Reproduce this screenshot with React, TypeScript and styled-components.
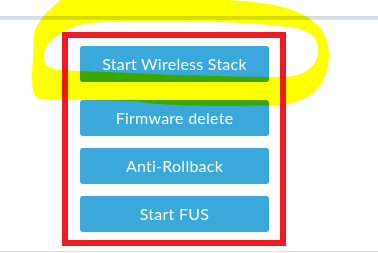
import styled, { createGlobalStyle } from "styled-components";

const GlobalStyle = createGlobalStyle`
  html, body {
    margin: 0;
    padding: 0;
    background: #ffffff;
  }
  body {
    font-family: Lato, "Open Sans", sans-serif;
  }
`;

const Page = styled.div`
  position: relative;
  width: 378px;
  height: 253px;
  display: flex;
  flex-direction: column;
  overflow: hidden;
  background: #fff;
`;

const TopRule = styled.div`
  margin-top: 16px;
  height: 0;
  border-top: 2px solid #d9d9d9;
  border-bottom: 2px solid #d3e6f1;
`;

const Frame = styled.div`
  box-sizing: border-box;
  width: 224px;
  height: 214px;
  margin: 12px 0 0 62px;
  border: 6px solid #ed1c24;
  padding: 8px 11px 8px 12px;
  display: flex;
  flex-direction: column;
`;

const ActionButton = styled.button<{ $gap: number }>`
  height: 36px;
  width: 189px;
  margin: 0 0 ${({ $gap }) => $gap}px 0;
  padding: 0 0 2px 0;
  border: none;
  border-radius: 3px;
  background: #3ba8db;
  color: #f1f8fc;
  font-family: Lato, "Open Sans", sans-serif;
  font-size: 16px;
  letter-spacing: 0.25px;
  text-align: center;
  cursor: pointer;
`;

const BottomRule = styled.div`
  margin-top: 5px;
  height: 1px;
  background: #e4e4e4;
`;

// freehand marker stroke drawn over the page
const Highlighter = styled.svg`
  position: absolute;
  left: 0;
  top: 0;
  pointer-events: none;
  mix-blend-mode: multiply;
`;

const buttons = [
  { label: "Start Wireless Stack", gap: 18 },
  { label: "Firmware delete", gap: 12 },
  { label: "Anti-Rollback", gap: 12 },
  { label: "Start FUS", gap: 0 },
];

const App = () => {
  return (
    <Page>
      <GlobalStyle />
      <TopRule />
      <Frame>
        {buttons.map((b) => (
          <ActionButton key={b.label} $gap={b.gap}>
            {b.label}
          </ActionButton>
        ))}
      </Frame>
      <BottomRule />
      <Highlighter width="378" height="253" viewBox="0 0 378 253">
        <path
          fill="#ffff00"
          fillRule="evenodd"
          d="M 63 -2 C 150 -4 220 -2 262 3 C 305 9 329 25 329 55 C 328 85 313 100 283 105 C 220 107 160 106 135 101 C 100 100 60 100 40 99 C 33 97 32 90 32 75 L 34 35 C 36 22 48 10 63 -2 Z
             M 63 33 C 52 37 45 45 44 55 C 43 64 47 68 58 70 C 130 73 210 77 283 77 C 302 76 314 70 318 55 C 320 40 312 31 295 28 C 260 22 200 21 150 21 C 100 21 75 22 63 33 Z"
        />
      </Highlighter>
    </Page>
  );
};

export default App;
